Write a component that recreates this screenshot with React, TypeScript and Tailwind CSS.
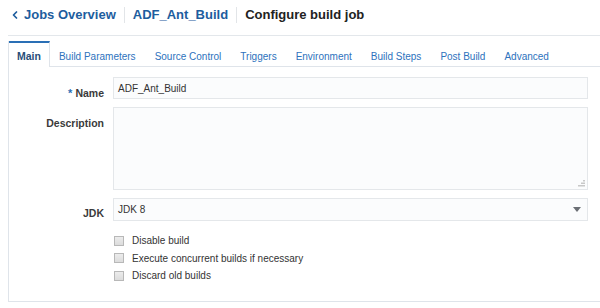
import { ChevronLeft } from 'lucide-react';

const tabs = ['Build Parameters', 'Source Control', 'Triggers', 'Environment', 'Build Steps', 'Post Build', 'Advanced'];

const options = ['Disable build', 'Execute concurrent builds if necessary', 'Discard old builds'];

function Checkbox({ label }: { label: string }) {
    return (
        <label className="flex items-center h-[17.5px] gap-[8px]">
            <span className="w-[10px] h-[10px] border border-[#b8b8b8] bg-gradient-to-b from-[#ececec] to-[#dcdcdc]" />
            <span className="text-[10px] text-[#333]">{label}</span>
        </label>
    );
}

export default function App() {
    return (
        <div className="w-[600px] h-[308px] bg-white overflow-hidden" style={{ fontFamily: '"Liberation Sans", Arial, sans-serif' }}>
            {/* breadcrumb */}
            <div className="ml-2 h-[36px] border-b border-[#e3e7eb] flex items-center pb-[5px]">
                <ChevronLeft className="w-[12px] h-[12px] ml-[1px] text-[#1d5d9e]" strokeWidth={3.5} />
                <span className="ml-[3px] text-[13px] font-bold text-[#1d5d9e]">Jobs Overview</span>
                <div className="w-px h-[16px] bg-[#e2e5e8] ml-[8px] mr-[8px]" />
                <span className="text-[13px] font-bold text-[#1d5d9e]">ADF_Ant_Build</span>
                <div className="w-px h-[16px] bg-[#e2e5e8] ml-[8px] mr-[8px]" />
                <span className="text-[13px] font-bold text-[#222]">Configure build job</span>
            </div>

            {/* tabs + panel */}
            <div className="ml-2 mt-[5px] h-[261px] border-l border-b border-[#dfe4ea] flex flex-col">
                <div className="flex h-[26px]">
                    <div className="px-[8px] border-t-2 border-t-[#2a6fb5] border-r border-r-[#dfe4ea] flex items-center pt-[4px]">
                        <span className="text-[10.5px] font-bold text-[#284e78]">Main</span>
                    </div>
                    <div className="flex-1 border-b border-[#dfe4ea] flex items-center gap-[19px] pl-[9px] pt-[5px]">
                        {tabs.map((t) => (
                            <span key={t} className="text-[10px] text-[#2d72bd]">{t}</span>
                        ))}
                    </div>
                </div>

                <div className="grid grid-cols-[95px_1fr] gap-x-[9px] gap-y-[8px] pt-[10px] pr-[12px]">
                    <div className="flex items-center justify-end h-[22px] pt-[11px]">
                        <span className="text-[11px] font-bold text-[#2a6fb5] mr-[3px]">*</span>
                        <span className="text-[10.5px] font-bold text-[#3a3a3a]">Name</span>
                    </div>
                    <div className="h-[22px] border border-[#e4e7ea] bg-[#fbfcfd] flex items-center px-[4px] text-[10px] text-[#333]">
                        ADF_Ant_Build
                    </div>

                    <div className="flex justify-end pt-[9px]">
                        <span className="text-[10.5px] font-bold text-[#3a3a3a]">Description</span>
                    </div>
                    <div className="relative h-[83px] border border-[#e4e7ea] bg-[#fbfcfd]">
                        <svg className="absolute right-[2px] bottom-[2px]" width="7" height="7" viewBox="0 0 7 7">
                            <rect x="5" y="0" width="2" height="1.5" fill="#c8c8c8" />
                            <rect x="3" y="2.5" width="4" height="1.5" fill="#c8c8c8" />
                            <rect x="0" y="5" width="7" height="1.5" fill="#c8c8c8" />
                        </svg>
                    </div>

                    <div className="flex items-center justify-end h-[23px] pt-[8px]">
                        <span className="text-[10.5px] font-bold text-[#3a3a3a]">JDK</span>
                    </div>
                    <div className="h-[23px] border border-[#e4e7ea] bg-[#fbfcfd] flex items-center justify-between px-[4px] text-[10px] text-[#333]">
                        <span>JDK 8</span>
                        <svg width="8" height="5" viewBox="0 0 8 5" className="mr-[2px]">
                            <path d="M0 0 L8 0 L4 5 Z" fill="#6b6f75" />
                        </svg>
                    </div>

                    <div />
                    <div className="flex flex-col pt-[3px] pl-[1px]">
                        {options.map((o) => (
                            <Checkbox key={o} label={o} />
                        ))}
                    </div>
                </div>
            </div>
        </div>
    );
}
